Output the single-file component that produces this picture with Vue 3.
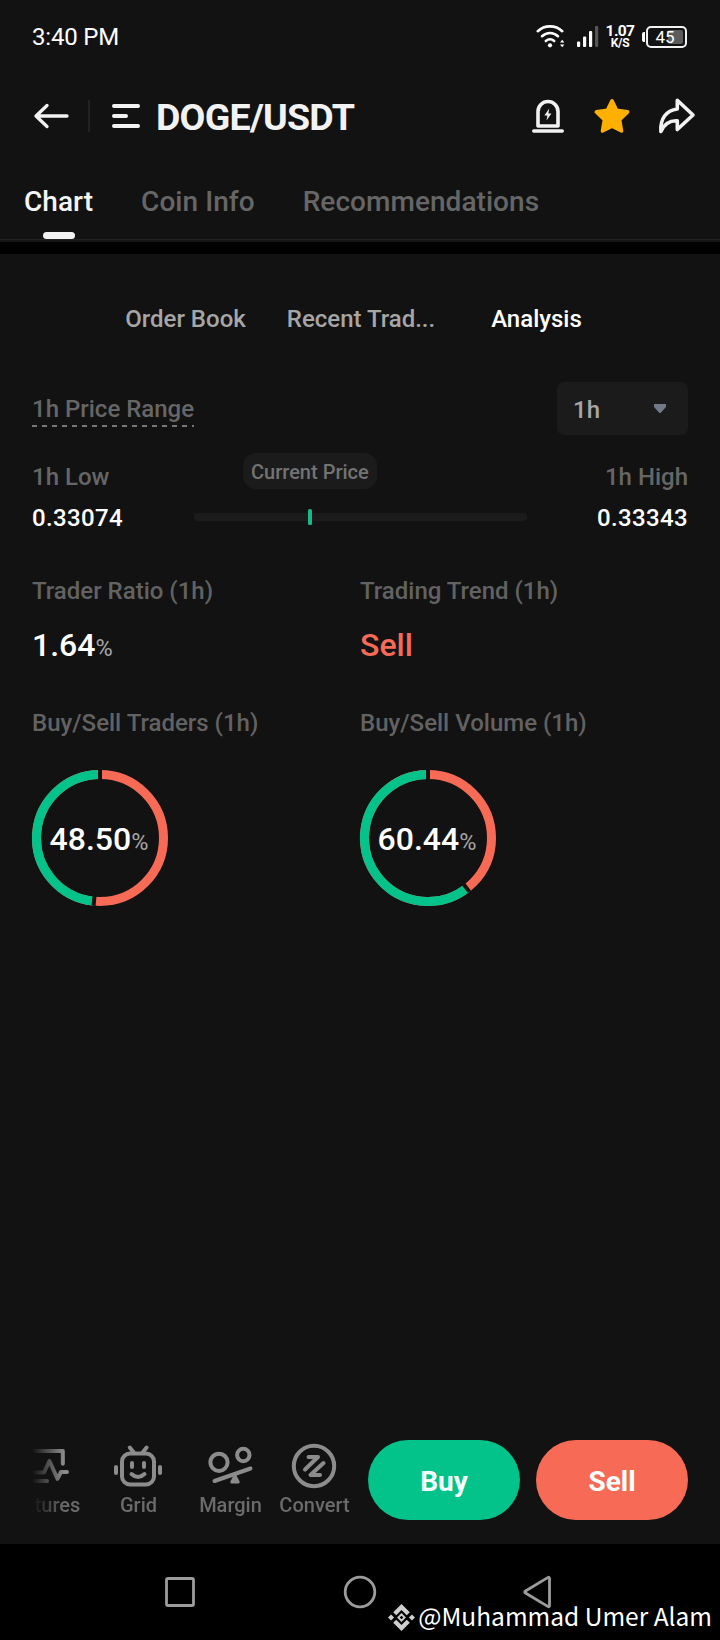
<template>
    <div class="screen">
        <header class="status-bar">
            <span class="clock">3:40 PM</span>
            <div class="status-icons">
                <svg class="wifi" width="30" height="24" viewBox="0 0 30 24">
                    <g fill="none" stroke="#fff" stroke-width="2.6" stroke-linecap="round">
                        <path d="M1.800 7.200C8.500.8 19.500.8 26.200 7.200" />
                        <path d="M6 12.200c4.800-4.300 11.200-4.300 16 0" />
                        <path d="M9.800 17c2.600-2.200 5.800-2.200 8.400 0" />
                    </g>
                    <circle cx="14" cy="21.300" r="2.100" fill="#fff" />
                    <path d="M24 18.500l2.200-2.700 2.200 2.700zM24 20.500l2.200 2.700 2.200-2.700z" fill="#fff" />
                </svg>
                <svg class="signal" width="22" height="22" viewBox="0 0 22 22">
                    <rect x="0" y="15.500" width="3.200" height="5.500" rx="1" fill="#fff" />
                    <rect x="6" y="10.500" width="3.200" height="10.500" rx="1" fill="#fff" />
                    <rect x="12" y="5" width="3.200" height="16" rx="1" fill="#fff" />
                    <rect x="18" y="0" width="3.200" height="21" rx="1" fill="#565656" />
                </svg>
                <div class="net-speed">
                    <span class="speed">1.07</span>
                    <span class="unit">K/S</span>
                </div>
                <div class="battery">
                    <i class="battery-tip"></i>
                    <div class="battery-body">
                        <i class="battery-fill"></i>
                        <span class="battery-level">45</span>
                    </div>
                </div>
            </div>
        </header>

        <div class="title-bar">
            <svg class="back" width="36" height="28" viewBox="0 0 36 28">
                <path d="M34 14H3M14 3.500L3 14l11 10.500" fill="none" stroke="#f2f2f2" stroke-width="3.300"
                    stroke-linecap="round" stroke-linejoin="round" />
            </svg>
            <i class="divider"></i>
            <div class="menu">
                <i></i>
                <i class="short"></i>
                <i></i>
            </div>
            <h1>DOGE/USDT</h1>
            <div class="actions">
                <svg width="36" height="36" viewBox="0 0 36 36">
                    <path d="M8 28V13.500a10 10 0 0 1 20 0V28z" fill="none" stroke="#f2f2f2" stroke-width="3.600"
                        stroke-linejoin="round" />
                    <path d="M3.800 33h28.400" stroke="#f2f2f2" stroke-width="3.600" stroke-linecap="round" />
                    <path d="M19.200 10.500l-4.800 7h3l-.9 5 4.900-7h-3z" fill="#f2f2f2" />
                </svg>
                <svg width="36" height="36" viewBox="0 0 36 36">
                    <path d="M18 2.800l4.600 9.600 11 1.500-8 7.800 1.900 11.300L18 28.200 8.500 33l1.900-11.300-8-7.800 11-1.500z"
                        fill="#fdb000" stroke="#fdb000" stroke-width="3.600" stroke-linejoin="round" />
                </svg>
                <svg width="38" height="36" viewBox="0 0 38 36">
                    <path d="M19.300 2.200L35 17 19.300 31.500v-8.700C11.500 22.300 6.500 25.500 2.900 33.500 2 21 8 12.300 19.300 11z"
                        fill="none" stroke="#f2f2f2" stroke-width="3.600" stroke-linejoin="round" />
                </svg>
            </div>
        </div>

        <nav class="tabs">
            <a v-for="tab in tabs" :key="tab" class="tab" :class="{ active: tab === activeTab }">
                <span>{{ tab }}</span>
                <i class="indicator"></i>
            </a>
        </nav>
        <div class="band"></div>

        <main>
            <nav class="subtabs">
                <a v-for="tab in subtabs" :key="tab" :class="{ active: tab === activeSubtab }">{{ tab }}</a>
            </nav>

            <div class="range-head">
                <span class="range-title">1h Price Range</span>
                <div class="select">
                    <span>1h</span>
                    <svg width="12" height="9" viewBox="0 0 12 9">
                        <path d="M0 0h12v3L7 8.500q-1 1-2 0L0 3z" fill="#717b88" />
                    </svg>
                </div>
            </div>

            <div class="range">
                <div class="bound">
                    <span>1h Low</span>
                    <b>0.33074</b>
                </div>
                <div class="track-wrap">
                    <div class="tooltip" :style="{ left: position + '%' }">Current Price</div>
                    <div class="track">
                        <i class="marker" :style="{ left: position + '%' }"></i>
                    </div>
                </div>
                <div class="bound high">
                    <span>1h High</span>
                    <b>0.33343</b>
                </div>
            </div>

            <div class="metrics">
                <div class="metric">
                    <span class="label">Trader Ratio (1h)</span>
                    <div class="value">1.64<small>%</small></div>
                </div>
                <div class="metric">
                    <span class="label">Trading Trend (1h)</span>
                    <div class="value sell">Sell</div>
                </div>
                <div v-for="ring in rings" :key="ring.label" class="metric">
                    <span class="label">{{ ring.label }}</span>
                    <div class="ring">
                        <svg width="136" height="136" viewBox="0 0 136 136">
                            <circle cx="68" cy="68" r="63.500" fill="none" stroke="#f76b56" stroke-width="9" />
                            <circle cx="68" cy="68" r="63.500" fill="none" stroke="#03c28a" stroke-width="9"
                                pathLength="100" :stroke-dasharray="`${ring.buy} 100`"
                                :transform="`rotate(${sellAngle(ring) - 90} 68 68)`" />
                            <path d="M68 0v14" stroke="#121212" stroke-width="4" />
                            <path d="M68 0v14" stroke="#121212" stroke-width="4"
                                :transform="`rotate(${sellAngle(ring)} 68 68)`" />
                        </svg>
                        <div class="value">{{ ring.buy.toFixed(2) }}<small>%</small></div>
                    </div>
                </div>
            </div>
        </main>

        <footer class="trade-bar">
            <div class="shortcuts">
                <a class="shortcut">
                    <svg width="48" height="48" viewBox="0 0 48 48">
                        <path d="M25 39H7V9h33.800v12.700M9 30.400h13l5.400-11.400 8 17.800 3.600-6.800h6" />
                    </svg>
                    <span>Futures</span>
                </a>
                <a class="shortcut">
                    <svg width="48" height="48" viewBox="0 0 48 48">
                        <rect x="8" y="11.500" width="32" height="31" rx="8" />
                        <path d="M2 25v6M46 25v6M18 21v4M30 21v4M17.500 32q6.500 6 13 0" />
                        <path d="M15.800 5.500l4 5M32.600 5.500l-4 5" />
                    </svg>
                    <span>Grid</span>
                </a>
                <a class="shortcut">
                    <svg width="48" height="48" viewBox="0 0 48 48">
                        <circle cx="13" cy="20.300" r="8.600" />
                        <circle cx="37.300" cy="13" r="6.200" />
                        <path d="M8.500 39L44.500 26.500" />
                        <path class="solid" d="M29 34l3.200 6h-6.400z" />
                    </svg>
                    <span>Margin</span>
                </a>
                <a class="shortcut narrow">
                    <svg width="48" height="48" viewBox="0 0 48 48">
                        <circle cx="24" cy="24" r="20.200" />
                        <path d="M18.500 15h9.500L15 27.500M33.500 21L20.500 33H30" />
                    </svg>
                    <span>Convert</span>
                </a>
            </div>
            <div class="trade-buttons">
                <button class="buy">Buy</button>
                <button class="sell">Sell</button>
            </div>
        </footer>

        <div class="system-nav">
            <svg width="34" height="34" viewBox="0 0 34 34">
                <rect x="3.500" y="3.500" width="27" height="27" rx="1.500" />
            </svg>
            <svg width="34" height="34" viewBox="0 0 34 34">
                <circle cx="17" cy="17" r="14.800" />
            </svg>
            <svg class="nav-back" width="34" height="34" viewBox="0 0 34 34">
                <path d="M29.500 3.600v26.800q0 2-1.800 1L5.500 18q-1.500-1 0-2L27.700 2.600q1.800-1 1.800 1z" />
            </svg>
        </div>

        <div class="watermark">
            <svg width="27" height="27" viewBox="0 0 126.600 126.600">
                <path fill="#cfcfcf" fill-rule="evenodd"
                    d="M38.700 53.200l24.600-24.600 24.600 24.600 14.300-14.300L63.300 0 24.400 38.900zM0 63.300L14.300 49l14.300 14.300-14.300 14.300zM38.700 73.400L63.300 98l24.600-24.600 14.300 14.300-38.900 38.900-38.900-38.900zM98 63.300L112.300 49l14.300 14.300-14.300 14.300zM84 63.300L63.300 42.600 42.600 63.300 63.300 84zM72 63.300L63.300 72l-8.700-8.700 8.700-8.700z" />
            </svg>
            <span>@Muhammad Umer Alam</span>
        </div>
    </div>
</template>

<script setup>
import { ref } from 'vue';

const tabs = ['Chart', 'Coin Info', 'Recommendations'];
const activeTab = ref('Chart');

const subtabs = ['Order Book', 'Recent Trad...', 'Analysis'];
const activeSubtab = ref('Analysis');

// current price between the low and the high, in percent
const position = ref(34.8);

const rings = [
    { label: 'Buy/Sell Traders (1h)', buy: 48.5 },
    { label: 'Buy/Sell Volume (1h)', buy: 60.44 },
];

const sellAngle = (ring) => (100 - ring.buy) * 3.6;
</script>

<style>
body {
    background: #121212;
}
</style>

<style scoped>
.screen {
    position: relative;
    display: flex;
    flex-direction: column;
    width: 720px;
    height: 1640px;
    overflow: hidden;
    background: #121212;
    color: #fff;
    font-family: Roboto, "Liberation Sans", sans-serif;
    font-weight: 500;
}

svg {
    display: block;
    flex: none;
}

.status-bar {
    display: flex;
    align-items: center;
    justify-content: space-between;
    height: 73px;
    padding: 0 33px 0 32px;
}

.clock {
    font-size: 24px;
    font-weight: 400;
    letter-spacing: -0.2px;
}

.status-icons {
    display: flex;
    align-items: center;
}

.wifi {
    margin-right: 11px;
    margin-top: -2px;
}

.signal {
    margin-right: 7px;
}

.net-speed {
    display: flex;
    flex-direction: column;
    align-items: center;
    width: 28px;
    margin-right: 8px;
    font-weight: 700;
}

.speed {
    font-size: 15.5px;
    line-height: 13px;
    letter-spacing: -0.6px;
}

.unit {
    font-size: 12px;
    line-height: 10px;
    letter-spacing: -0.4px;
}

.battery {
    display: flex;
    align-items: center;
}

.battery-tip {
    width: 3px;
    height: 10px;
    margin-right: 1px;
    border-radius: 2px 0 0 2px;
    background: #fff;
}

.battery-body {
    position: relative;
    display: flex;
    align-items: center;
    justify-content: center;
    box-sizing: border-box;
    width: 41px;
    height: 22px;
    border: 2px solid #f2f2f2;
    border-radius: 5px;
}

.battery-fill {
    position: absolute;
    top: 2px;
    right: 2px;
    bottom: 2px;
    width: 15px;
    border-radius: 2px;
    background: #5c5c5c;
}

.battery-level {
    position: relative;
    margin-right: 3px;
    font-size: 17px;
    line-height: 18px;
    font-weight: 400;
}

.title-bar {
    display: flex;
    align-items: center;
    height: 86px;
    padding: 0 24px 0 33px;
}

.divider {
    width: 2px;
    height: 32px;
    margin-left: 19px;
    background: #222;
}

.menu {
    display: flex;
    flex-direction: column;
    gap: 6px;
    width: 28px;
    margin-left: 22px;
}

.menu i {
    height: 4px;
    border-radius: 2px;
    background: #f2f2f2;
}

.menu .short {
    width: 16px;
}

h1 {
    margin: 2px 0 0 16px;
    font-size: 37.5px;
    line-height: 44px;
    font-weight: 700;
    letter-spacing: -0.75px;
    color: #f2f2f2;
}

.actions {
    display: flex;
    gap: 28px;
    margin-left: auto;
}

.tabs {
    display: flex;
    gap: 48px;
    height: 80px;
    padding-left: 24px;
    border-bottom: 1px solid #222;
}

.tab {
    display: flex;
    flex-direction: column;
    align-items: center;
    padding-top: 23px;
    font-size: 28px;
    line-height: 40px;
    letter-spacing: 0.05px;
    color: #666;
}

.tab.active {
    color: #f5f5f5;
}

.indicator {
    width: 32px;
    height: 8px;
    margin-top: 10px;
    border-radius: 4px;
}

.active .indicator {
    background: #f2f2f2;
}

.band {
    height: 12px;
    border-top: 2px solid #161616;
    background: #000;
}

main {
    flex: 1;
    padding: 41px 32px 0;
}

.subtabs {
    display: grid;
    grid-template-columns: repeat(3, 175.5px);
    justify-content: center;
    padding-left: 2px;
    font-size: 24px;
    line-height: 48px;
    text-align: center;
    color: #a6a6a6;
}

.subtabs .active {
    color: #fff;
}

.range-head {
    display: flex;
    align-items: flex-start;
    justify-content: space-between;
    height: 53px;
    margin-top: 39px;
}

.range-title {
    margin-top: 13px;
    padding-bottom: 4px;
    font-size: 24px;
    line-height: 28px;
    color: #666;
    background: repeating-linear-gradient(90deg, #777 0 5px, transparent 5px 10px) left bottom / 100% 2px no-repeat;
}

.select {
    display: flex;
    align-items: center;
    justify-content: space-between;
    box-sizing: border-box;
    width: 131px;
    height: 53px;
    padding: 0 22px 0 16px;
    border-radius: 7px;
    background: #1b1b1b;
    font-size: 24px;
    color: #a6a6a6;
}

.select span {
    padding-top: 2px;
}

.range {
    display: flex;
    margin-top: 22px;
}

.bound {
    display: flex;
    flex-direction: column;
    width: 162px;
    font-size: 24px;
    line-height: 40px;
    color: #666;
}

.bound b {
    padding-top: 1px;
    font-weight: 500;
    letter-spacing: 0.35px;
    color: #fff;
}

.bound.high {
    width: 161px;
    text-align: right;
}

.track-wrap {
    position: relative;
    flex: 1;
    padding-top: 56px;
}

.tooltip {
    position: absolute;
    top: -4px;
    box-sizing: border-box;
    height: 36px;
    padding: 0 8px;
    border-radius: 13px;
    background: #1b1b1b;
    font-size: 20px;
    line-height: 38px;
    white-space: nowrap;
    color: #737373;
    transform: translateX(-50%);
}

.track {
    position: relative;
    height: 8px;
    border-radius: 3px;
    background: #1b1b1b;
}

.marker {
    position: absolute;
    top: -4px;
    width: 4px;
    height: 16px;
    border-radius: 1.5px;
    background: #18b888;
    transform: translateX(-50%);
}

.metrics {
    display: grid;
    grid-template-columns: 1fr 1fr;
    row-gap: 42px;
    margin-top: 37px;
}

.label {
    display: block;
    font-size: 24px;
    line-height: 32px;
    color: #626262;
}

.value {
    height: 40px;
    margin-top: 18px;
    font-size: 32px;
    line-height: 40px;
}

.value small {
    font-size: 23.5px;
    line-height: 1;
    font-weight: 400;
    color: #a6a6a6;
}

.value.sell {
    color: #f76b56;
}

.ring {
    display: grid;
    width: 136px;
    margin-top: 31px;
}

.ring svg,
.ring .value {
    grid-area: 1 / 1;
}

.ring .value {
    place-self: center;
    margin: 2px 2px 0 0;
}

.trade-bar {
    display: flex;
    justify-content: space-between;
    height: 104px;
    padding: 0 32px;
}

.shortcuts {
    display: flex;
    justify-content: flex-end;
    width: 320px;
    overflow: hidden;
    -webkit-mask-image: linear-gradient(90deg, transparent, #000 32px);
    mask-image: linear-gradient(90deg, transparent, #000 32px);
}

.shortcut {
    display: flex;
    flex: none;
    flex-direction: column;
    align-items: center;
    width: 92px;
    padding-top: 2px;
    font-size: 20px;
    line-height: 24px;
    color: #6b6b6b;
}

.shortcut.narrow {
    width: 76px;
}

.shortcut span {
    padding-left: 1px;
}

.shortcut svg {
    margin-bottom: 3px;
    fill: none;
    stroke: #8c8c8c;
    stroke-width: 4;
    stroke-linecap: round;
    stroke-linejoin: round;
}

.shortcut .solid {
    fill: #8c8c8c;
    stroke-width: 3;
}

.trade-buttons {
    display: flex;
    gap: 16px;
}

button {
    width: 152px;
    height: 80px;
    padding: 2px 0 0;
    border: 0;
    border-radius: 40px;
    font: 700 28px Roboto, sans-serif;
    color: #f5fffb;
}

.buy {
    background: #03c28a;
}

button.sell {
    background: #f76b56;
}

.system-nav {
    display: grid;
    grid-template-columns: repeat(3, 180px);
    place-content: center;
    place-items: center;
    height: 96px;
    background: #000;
}

.system-nav svg {
    fill: none;
    stroke: #9c9c9c;
    stroke-width: 2.8;
}

.nav-back {
    margin-right: 6px;
}

.watermark {
    position: absolute;
    right: 8px;
    bottom: 6px;
    display: flex;
    align-items: center;
    gap: 3px;
    font-family: "Noto Sans CJK SC", "Noto Sans", sans-serif;
    font-size: 24.5px;
    line-height: 36px;
    font-weight: 400;
    white-space: nowrap;
}

.watermark span {
    margin-top: -2px;
}
</style>
